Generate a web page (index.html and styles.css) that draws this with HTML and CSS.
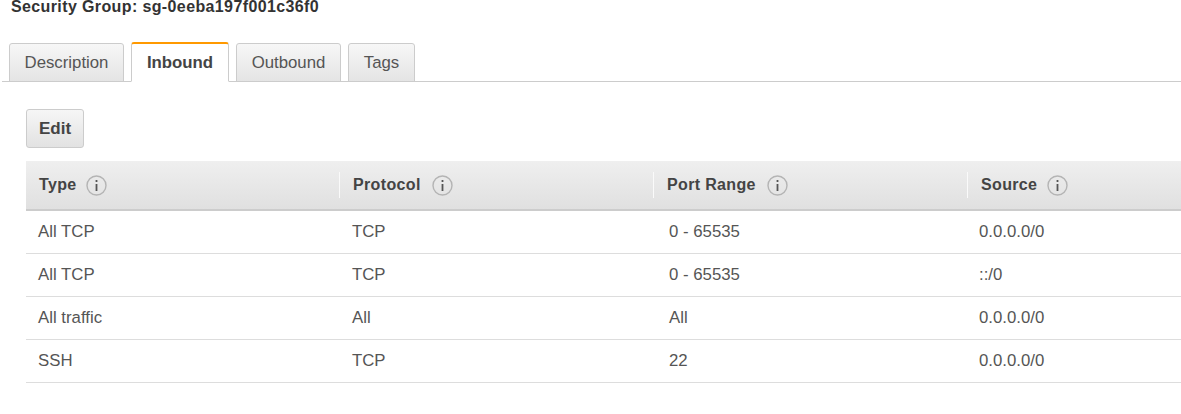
FILE: index.html
```html
<!DOCTYPE html>
<html lang="en">
<head>
<meta charset="utf-8">
<title>Security Group</title>
<link rel="stylesheet" href="styles.css">
</head>
<body>
<h1 class="title">Security Group: sg-0eeba197f001c36f0</h1>
<nav class="tabs">
  <a class="tab tab-desc">Description</a>
  <a class="tab tab-active">Inbound</a>
  <a class="tab tab-out">Outbound</a>
  <a class="tab tab-tags">Tags</a>
</nav>
<section class="panel">
  <button class="edit">Edit</button>
  <div class="grid head">
    <div class="th th-type"><span>Type</span><svg class="info" viewBox="0 0 21 21"><circle cx="10.5" cy="10.5" r="9.5"/><path d="M10.5 9v7M10.5 5v2"/></svg></div>
    <div class="th sep"><span>Protocol</span><svg class="info" viewBox="0 0 21 21"><circle cx="10.5" cy="10.5" r="9.5"/><path d="M10.5 9v7M10.5 5v2"/></svg></div>
    <div class="th sep"><span>Port Range</span><svg class="info" viewBox="0 0 21 21"><circle cx="10.5" cy="10.5" r="9.5"/><path d="M10.5 9v7M10.5 5v2"/></svg></div>
    <div class="th sep th-source"><span>Source</span><svg class="info" viewBox="0 0 21 21"><circle cx="10.5" cy="10.5" r="9.5"/><path d="M10.5 9v7M10.5 5v2"/></svg></div>
  </div>
  <div class="grid row"><div>All TCP</div><div>TCP</div><div class="port">0 - 65535</div><div class="src">0.0.0.0/0</div></div>
  <div class="grid row"><div>All TCP</div><div>TCP</div><div class="port">0 - 65535</div><div class="src">::/0</div></div>
  <div class="grid row"><div>All traffic</div><div>All</div><div class="port">All</div><div class="src">0.0.0.0/0</div></div>
  <div class="grid row"><div>SSH</div><div>TCP</div><div class="port">22</div><div class="src">0.0.0.0/0</div></div>
</section>
</body>
</html>
```
FILE: styles.css
```css
html, body { margin: 0; padding: 0; background: #fff; }
body { width: 1181px; height: 414px; overflow: hidden; font-family: "Liberation Sans", Arial, sans-serif; color: #444; }
.title { margin: 0; padding-left: 11px; height: 42px; font-size: 16px; line-height: 14px; font-weight: 700; color: #333; letter-spacing: 0.38px; }
.tabs { display: flex; align-items: flex-end; gap: 7px; margin-left: 2px; padding-left: 7px; height: 40px; box-sizing: border-box; border-bottom: 1px solid #ccc; }
.tab { box-sizing: border-box; height: 39px; margin-bottom: -1px; border: 1px solid #ccc; border-radius: 3px 3px 0 0; background: linear-gradient(#f7f7f7, #e4e4e4); font-size: 16.8px; line-height: 37px; color: #555; text-align: center; }
.tab-desc { width: 115px; }
.tab-out { width: 105px; }
.tab-tags { width: 67px; }
.tab-active { width: 98px; height: 40px; border-top: 2px solid #f90; border-bottom: 1px solid #fff; background: #fff; font-weight: 700; color: #444; }
.panel { padding: 27px 0 0 26px; }
.edit { display: block; box-sizing: border-box; width: 58px; height: 39px; padding: 0; border: 1px solid #ccc; border-radius: 3px; background: linear-gradient(#f6f6f6, #e2e2e2); font-family: inherit; font-size: 17px; font-weight: 700; color: #444; }
.grid { display: grid; grid-template-columns: 314px 314px 314px 213px; }
.head { margin-top: 13px; height: 50px; box-sizing: border-box; align-items: center; border-bottom: 2px solid #ccc; background: linear-gradient(#efefef, #e0e0e0); }
.th { display: flex; align-items: center; gap: 11px; height: 26px; padding-left: 13px; font-size: 16px; font-weight: 700; color: #444; letter-spacing: 0.35px; }
.th-type { gap: 9px; }
.th-source { gap: 10px; }
.sep { border-left: 1px solid #fafafa; position: relative; left: -1px; }
.info { width: 21px; height: 21px; flex: none; fill: none; stroke: #b4b4b4; stroke-width: 1.4; }
.info path { stroke: #555; stroke-width: 1.8; }
.row { height: 43px; box-sizing: border-box; align-items: center; padding-left: 12px; border-bottom: 1px solid #ddd; font-size: 16.8px; color: #555; grid-template-columns: 314px 317px 310px 202px; }
```
